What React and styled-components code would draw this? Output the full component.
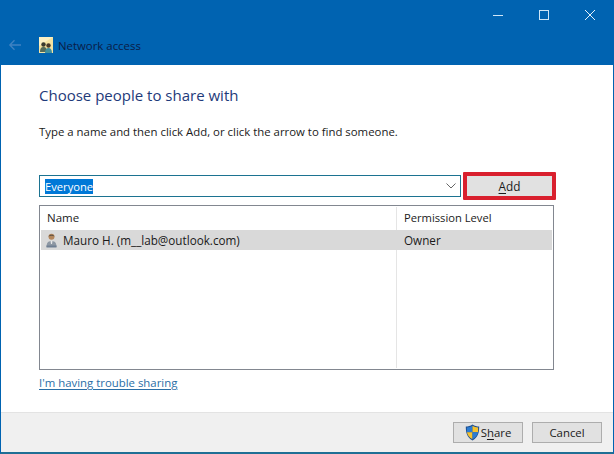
import React from 'react';
import styled, { createGlobalStyle } from 'styled-components';

const GlobalStyle = createGlobalStyle`
  html, body {
    margin: 0;
    padding: 0;
    background: #fff;
  }
  body {
    font-family: "Open Sans", "Noto Sans", "Liberation Sans", sans-serif;
    font-size: 12px;
    color: #1a1a1a;
  }
`

const Frame = styled.div`
  width: 614px;
  height: 454px;
  box-sizing: border-box;
  display: flex;
  flex-direction: column;
  background: #fff;
  border-left: 1px solid #0063b1;
  border-right: 1px solid #0063b1;
  border-bottom: 2px solid #1f6f95;
  overflow: hidden;
`

const TitleBar = styled.header`
  height: 65px;
  flex: none;
  margin: 0 -1px;
  background: #0063b1;
  display: flex;
  flex-direction: column;
`

const WindowControls = styled.div`
  height: 31px;
  display: flex;
  justify-content: flex-end;
  padding-right: 1px;
`

const ControlButton = styled.div`
  width: 46px;
  height: 30px;
  display: flex;
  align-items: center;
  justify-content: center;
  svg {
    display: block;
  }
`

const NavRow = styled.div`
  height: 28px;
  display: flex;
  align-items: center;
  padding-left: 8px;
`

const BackArrow = styled.svg`
  margin-right: 17px;
`

const TitleIcon = styled.svg`
  margin-right: 5px;
`

const WindowTitle = styled.span`
  font-size: 11.4px;
  color: #0a1c47;
`

const Content = styled.main`
  flex: 1;
  display: flex;
  flex-direction: column;
  padding: 0 0 0 38px;
`

const Heading = styled.h1`
  margin: 19px 0 0;
  font-size: 15px;
  line-height: 22px;
  font-weight: 400;
  color: #1e3a7a;
`

const Hint = styled.p`
  margin: 18px 0 0;
  font-size: 11.4px;
  line-height: 16px;
  color: #1a1a1a;
`

const AddRow = styled.div`
  margin-top: 32px;
  display: flex;
  align-items: center;
  height: 28px;
`

const Combo = styled.div`
  width: 422px;
  height: 22px;
  box-sizing: border-box;
  border: 1px solid #1c7391;
  display: flex;
  align-items: center;
  justify-content: space-between;
  padding: 0 4px 0 5px;
`

const Selected = styled.span`
  background: #0078d7;
  color: #fff;
  font-size: 11.2px;
  line-height: 15px;
`

const Highlight = styled.div`
  margin-left: 2px;
  width: 93px;
  height: 28px;
  box-sizing: border-box;
  border: 4px solid #d9202e;
  border-radius: 1px;
  background: #e1e1e1;
  display: flex;
  align-items: center;
  justify-content: center;
  font-size: 11.8px;
  color: #1a1a1a;
`

const Mnemonic = styled.span`
  text-decoration: underline;
  text-underline-offset: 2px;
`

const ListView = styled.div`
  margin-top: 5px;
  width: 515px;
  height: 165px;
  box-sizing: border-box;
  border: 1px solid #828790;
  padding: 1px;
  display: grid;
  grid-template-columns: 355px 1fr;
  grid-template-rows: 23px 20px 1fr;
`

const HeaderCell = styled.div`
  display: flex;
  align-items: center;
  padding: 0 0 2px ${p => (p.$second ? '7px' : '6px')};
  font-size: ${p => (p.$second ? '11.2px' : '11.5px')};
  border-left: ${p => (p.$second ? '1px solid #e5e5e5' : 'none')};
`

const RowCell = styled.div`
  display: flex;
  align-items: center;
  gap: 5px;
  padding-left: ${p => (p.$second ? '8px' : '4px')};
  font-size: 11.7px;
  background: #d9d9d9;
`

const EmptyCell = styled.div`
  border-left: ${p => (p.$second ? '1px solid #e5e5e5' : 'none')};
`

const TroubleLink = styled.a`
  margin-top: 5px;
  width: fit-content;
  font-size: 11.4px;
  line-height: 16px;
  color: #2a6ea6;
  text-decoration: underline;
  text-underline-offset: 2px;
`

const Footer = styled.footer`
  height: 40px;
  flex: none;
  box-sizing: border-box;
  border-top: 1px solid #e3e3e3;
  background: #f0f0f0;
  display: flex;
  justify-content: flex-end;
  gap: 9px;
  padding: 9px 11px 0 0;
`

const DialogButton = styled.div`
  width: 70px;
  height: 21px;
  box-sizing: border-box;
  border: 1px solid #adadad;
  background: #e1e1e1;
  display: flex;
  align-items: center;
  justify-content: center;
  gap: 1px;
  font-size: 11.4px;
  color: #1a1a1a;
`

const PeopleIcon = () => (
    <TitleIcon width="14" height="16" viewBox="0 0 14 16">
        <rect width="14" height="16" fill="#f4e3a1" />
        <path d="M0 0h14L0 9z" fill="#fbf0c4" />
        <circle cx="4.5" cy="7.5" r="2.2" fill="#3a3a2e" />
        <path d="M1 15c0-4 1.5-5 3.5-5S8 11 8 15z" fill="#556b5a" />
        <circle cx="9.5" cy="8.5" r="2.2" fill="#4a3a2a" />
        <path d="M6 16c0-3.5 1.5-5 3.5-5s3.5 1.500 3.500 5z" fill="#3f8f9e" />
    </TitleIcon>
)

const UserIcon = () => (
    <svg width="13" height="15" viewBox="0 0 13 15">
        <circle cx="6.500" cy="3.800" r="3" fill="#b5875c" />
        <path d="M3.500 3.500C4 1 9 1 9.500 3.500 8 2.500 5 2.500 3.500 3.500z" fill="#5e5245" />
        <path d="M1.500 14c0-4 1.500-6 5-6s5 2 5 6z" fill="#8d97a3" />
        <path d="M1.500 12.500h10V14.500h-10z" fill="#6f7f93" />
        <path d="M5.500 8h2l-.5 3h-1z" fill="#e8e8e8" />
    </svg>
)

const ShieldIcon = () => (
    <svg width="15" height="17" viewBox="0 0 15 17">
        <path d="M7.500.5C5.500 2 3 2.600.8 2.600c0 6 1 11 6.700 13.900 5.700-2.900 6.700-7.900 6.700-13.900C12 2.600 9.500 2 7.500.5z" fill="#1f4f8f" />
        <path d="M7.500 1.800V8.200H2C1.900 6.500 1.900 5 1.900 3.500 3.800 3.400 5.800 3 7.500 1.800z" fill="#2b7cd3" />
        <path d="M7.500 1.800C9.200 3 11.200 3.400 13.100 3.500c0 1.500 0 3-.1 4.700H7.500z" fill="#f6c22e" />
        <path d="M2 8.200h5.500v7C4 13.200 2.400 11 2 8.200z" fill="#f6c22e" />
        <path d="M7.500 8.200H13c-.4 2.800-2 5-5.500 7z" fill="#2b7cd3" />
    </svg>
)

const App = () => {
    return (
        <Frame>
            <GlobalStyle />
            <TitleBar>
                <WindowControls>
                    <ControlButton>
                        <svg width="10" height="10" viewBox="0 0 10 10">
                            <path d="M0 5.500h10" stroke="#cfe6f7" strokeWidth="1" />
                        </svg>
                    </ControlButton>
                    <ControlButton>
                        <svg width="10" height="10" viewBox="0 0 10 10">
                            <rect x=".5" y=".5" width="9" height="9" fill="none" stroke="#cfe6f7" />
                        </svg>
                    </ControlButton>
                    <ControlButton>
                        <svg width="10" height="10" viewBox="0 0 10 10">
                            <path d="M0 0l10 10M10 0L0 10" stroke="#e3f1fb" strokeWidth="1" />
                        </svg>
                    </ControlButton>
                </WindowControls>
                <NavRow>
                    <BackArrow width="14" height="12" viewBox="0 0 14 12">
                        <path d="M13 6H2M6.500 1.300L1.800 6l4.700 4.700" fill="none" stroke="#3f83c2" strokeWidth="1.300" />
                    </BackArrow>
                    <PeopleIcon />
                    <WindowTitle>Network access</WindowTitle>
                </NavRow>
            </TitleBar>
            <Content>
                <Heading>Choose people to share with</Heading>
                <Hint>Type a name and then click Add, or click the arrow to find someone.</Hint>
                <AddRow>
                    <Combo>
                        <Selected>Everyone</Selected>
                        <svg width="10" height="6" viewBox="0 0 10 6">
                            <path d="M.5.500L5 5 9.500.5" fill="none" stroke="#666" strokeWidth="1" />
                        </svg>
                    </Combo>
                    <Highlight><span><Mnemonic>A</Mnemonic>dd</span></Highlight>
                </AddRow>
                <ListView>
                    <HeaderCell>Name</HeaderCell>
                    <HeaderCell $second>Permission Level</HeaderCell>
                    <RowCell><UserIcon />Mauro H. (m__lab@outlook.com)</RowCell>
                    <RowCell $second>Owner</RowCell>
                    <EmptyCell />
                    <EmptyCell $second />
                </ListView>
                <TroubleLink>I'm having trouble sharing</TroubleLink>
            </Content>
            <Footer>
                <DialogButton><ShieldIcon /><span>S<Mnemonic>h</Mnemonic>are</span></DialogButton>
                <DialogButton>Cancel</DialogButton>
            </Footer>
        </Frame>
    );
};

export default App;
